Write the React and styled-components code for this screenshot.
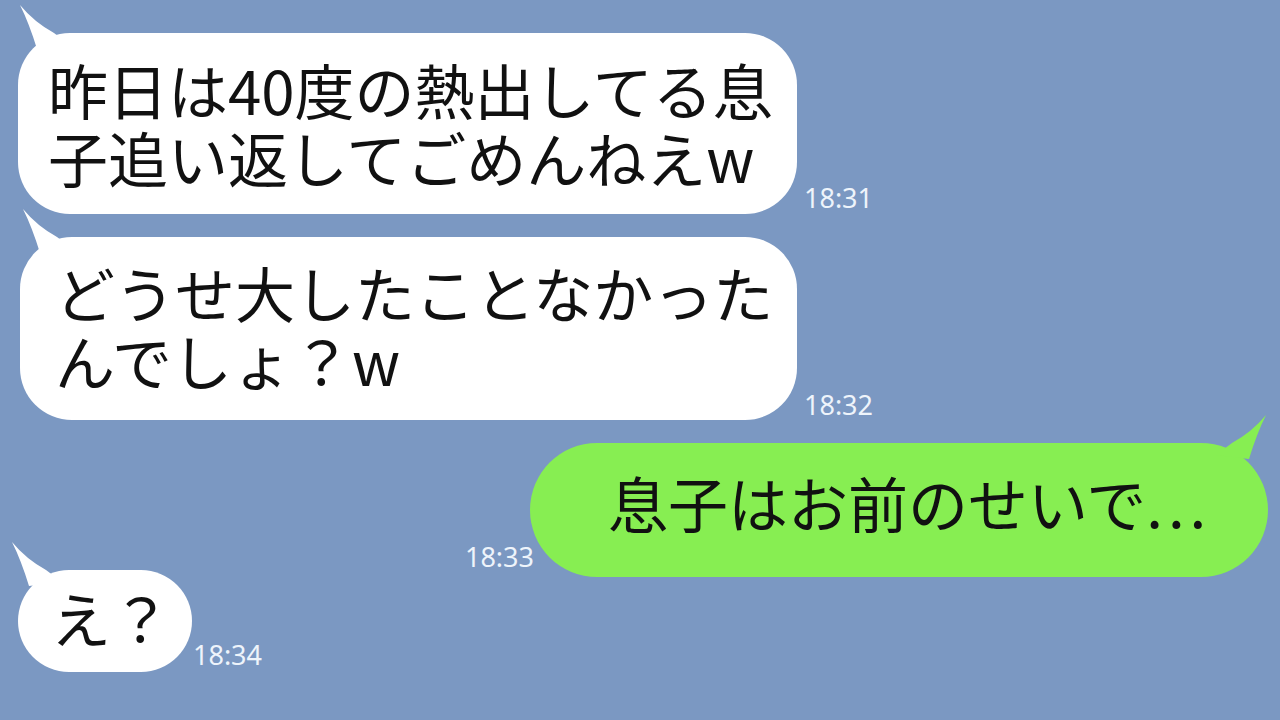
import React from 'react';
import styled, { createGlobalStyle } from 'styled-components';

const Global = createGlobalStyle`
  html, body {
    margin: 0;
    padding: 0;
    background: #7b98c2;
  }
`;

// Styles
const Screen = styled.div`
  width: 1280px;
  height: 720px;
  padding-top: 33px;
  box-sizing: border-box;
  background: #7b98c2;
  overflow: hidden;
  font-family: "Noto Sans CJK JP", "Noto Sans", sans-serif;
`;

const Row = styled.div`
  display: flex;
  align-items: flex-end;
  justify-content: ${p => (p.$mine ? 'flex-end' : 'flex-start')};
  margin-top: ${p => p.$mt}px;
  padding-left: ${p => p.$pl || 0}px;
  padding-right: ${p => p.$pr || 0}px;
`;

const Bubble = styled.div`
  position: relative;
  box-sizing: border-box;
  width: ${p => p.$w}px;
  height: ${p => p.$h}px;
  padding-top: ${p => p.$pt}px;
  padding-left: ${p => p.$pl}px;
  border-radius: ${p => p.$r}px;
  background: ${p => (p.$mine ? '#87ee52' : '#ffffff')};
  color: #111;
  font-size: 60px;
  line-height: 68px;
  white-space: nowrap;
`;

const Dots = styled.span`
  letter-spacing: 5px;
`;

const Tail = styled.svg`
  position: absolute;
  top: -30px;
  width: 60px;
  height: 60px;
  overflow: visible;
  ${p => (p.$mine
    ? `right: ${p.$dx}px; transform: scaleX(-1);`
    : `left: ${p.$dx}px;`)}
`;

const Time = styled.span`
  font-family: "Noto Sans", sans-serif;
  font-size: 27px;
  line-height: 27px;
  color: #eef4fb;
  margin-bottom: ${p => p.$mb}px;
  margin-left: ${p => p.$ml || 0}px;
  margin-right: ${p => p.$mr || 0}px;
`;

const BubbleTail = ({ mine, dx, fill }) => (
  <Tail $mine={mine} $dx={dx} viewBox="0 0 60 60">
    <path d="M2 2 Q 11 20 19 46 L 52 42 L 36 30 Q 16 19 2 2 Z" fill={fill} />
  </Tail>
);

const App = () => (
  <>
    <Global />
    <Screen>
      <Row $mt={0} $pl={18}>
        <Bubble $w={779} $h={181} $pt={22} $pl={30} $r={52}>
          <BubbleTail dx={0} fill="#ffffff" />
          昨日は40度の熱出してる息<br />子追い返してごめんねえw
        </Bubble>
        <Time $mb={3} $ml={7}>18:31</Time>
      </Row>

      <Row $mt={23} $pl={20}>
        <Bubble $w={777} $h={183} $pt={21} $pl={35} $r={52}>
          <BubbleTail dx={1} fill="#ffffff" />
          どうせ大したことなかった<br />んでしょ？w
        </Bubble>
        <Time $mb={2} $ml={7}>18:32</Time>
      </Row>

      <Row $mt={23} $mine $pr={12}>
        <Time $mb={7} $mr={-4}>18:33</Time>
        <Bubble $mine $w={738} $h={134} $pt={25} $pl={78} $r={67}>
          <BubbleTail mine dx={0} fill="#87ee52" />
          息子はお前のせいで<Dots>...</Dots>
        </Bubble>
      </Row>

      <Row $mt={-7} $pl={18}>
        <Bubble $w={174} $h={102} $pt={13} $pl={33} $r={51}>
          <BubbleTail dx={-8} fill="#ffffff" />
          え？
        </Bubble>
        <Time $mb={4} $ml={1}>18:34</Time>
      </Row>
    </Screen>
  </>
);

export default App;
